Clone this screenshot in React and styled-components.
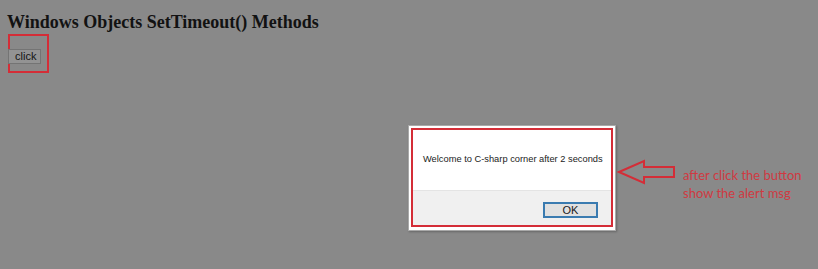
import styled, { createGlobalStyle } from 'styled-components';

const GlobalStyle = createGlobalStyle`
  html, body {
    margin: 0;
    padding: 0;
    background-color: #898989;
  }
`;

const Page = styled.div`
  padding: 12px 0 0 7px;
  height: 269px;
  box-sizing: border-box;
  overflow: hidden;
`;

const Heading = styled.h1`
  margin: 0;
  font-family: 'Liberation Serif', 'Times New Roman', serif;
  font-weight: bold;
  font-size: 18px;
  line-height: 21px;
  color: #121212;
`;

const ClickArea = styled.div`
  margin: 1px 0 0 1px;
  width: 41px;
  height: 39px;
  box-sizing: border-box;
  border: 2px solid #d42d37;
  padding-top: 13px;
`;

const ClickButton = styled.button`
  display: block;
  margin: 0 0 0 -2px;
  width: 33px;
  height: 15px;
  padding: 0 0 0 6px;
  box-sizing: border-box;
  text-align: left;
  font-family: 'Liberation Sans', Arial, sans-serif;
  font-size: 11px;
  line-height: 13px;
  color: #141414;
  background-color: #939393;
  border: 1px solid #747474;
  border-radius: 0;
`;

const Stage = styled.div`
  display: flex;
  align-items: flex-start;
  margin: 52px 0 0 401px;
`;

const Dialog = styled.div`
  width: 208px;
  height: 106px;
  box-sizing: border-box;
  padding: 2px 2px 3px 2px;
  background-color: #ffffff;
  border: 1px solid #a9a9a9;
  box-shadow: 1px 1px 2px rgba(0, 0, 0, 0.25);
`;

const Frame = styled.div`
  height: 100%;
  box-sizing: border-box;
  border: 2px solid #d42d37;
  display: flex;
  flex-direction: column;
`;

const Message = styled.div`
  height: 60px;
  box-sizing: border-box;
  padding: 23px 0 0 10px;
  background-color: #ffffff;
  font-family: 'Liberation Sans', Arial, sans-serif;
  font-size: 9.3px;
  line-height: 12px;
  color: #222;
  white-space: nowrap;
`;

const Footer = styled.div`
  flex: 1;
  display: flex;
  justify-content: flex-end;
  align-items: flex-start;
  padding: 11px 13px 0 0;
  background-color: #f0f0f0;
  border-top: 1px solid #e4e4e4;
`;

const OkButton = styled.button`
  width: 55px;
  height: 16px;
  padding: 0;
  box-sizing: border-box;
  font-family: 'Liberation Sans', Arial, sans-serif;
  font-size: 11px;
  line-height: 12px;
  color: #1a1a1a;
  background-color: #e1e1e1;
  border: 2px solid #3a7bb0;
  border-radius: 0;
`;

const Annotation = styled.div`
  display: flex;
  align-items: flex-start;
  margin-top: 32px;
`;

const Arrow = styled.svg`
  display: block;
  margin-left: 1px;
`;

const Note = styled.div`
  margin: 9px 0 0 6px;
  font-family: Lato, 'Open Sans', sans-serif;
  font-size: 13px;
  line-height: 18px;
  color: #d03a42;
`;

export default function App() {
  return (
    <>
      <GlobalStyle />
      <Page>
        <Heading>Windows Objects SetTimeout() Methods</Heading>
        <ClickArea>
          <ClickButton>click</ClickButton>
        </ClickArea>
        <Stage>
          <Dialog>
            <Frame>
              <Message>Welcome to C-sharp corner after 2 seconds</Message>
              <Footer>
                <OkButton>OK</OkButton>
              </Footer>
            </Frame>
          </Dialog>
          <Annotation>
            <Arrow width="60" height="30" viewBox="0 0 60 30">
              <path
                d="M2 15 L27 4 L27 10 L57 10 L57 20 L27 20 L27 26 Z"
                fill="none"
                stroke="#d42d37"
                strokeWidth="2"
                strokeLinejoin="miter"
              />
            </Arrow>
            <Note>
              after click the button
              <br />
              show the alert msg
            </Note>
          </Annotation>
        </Stage>
      </Page>
    </>
  );
}
